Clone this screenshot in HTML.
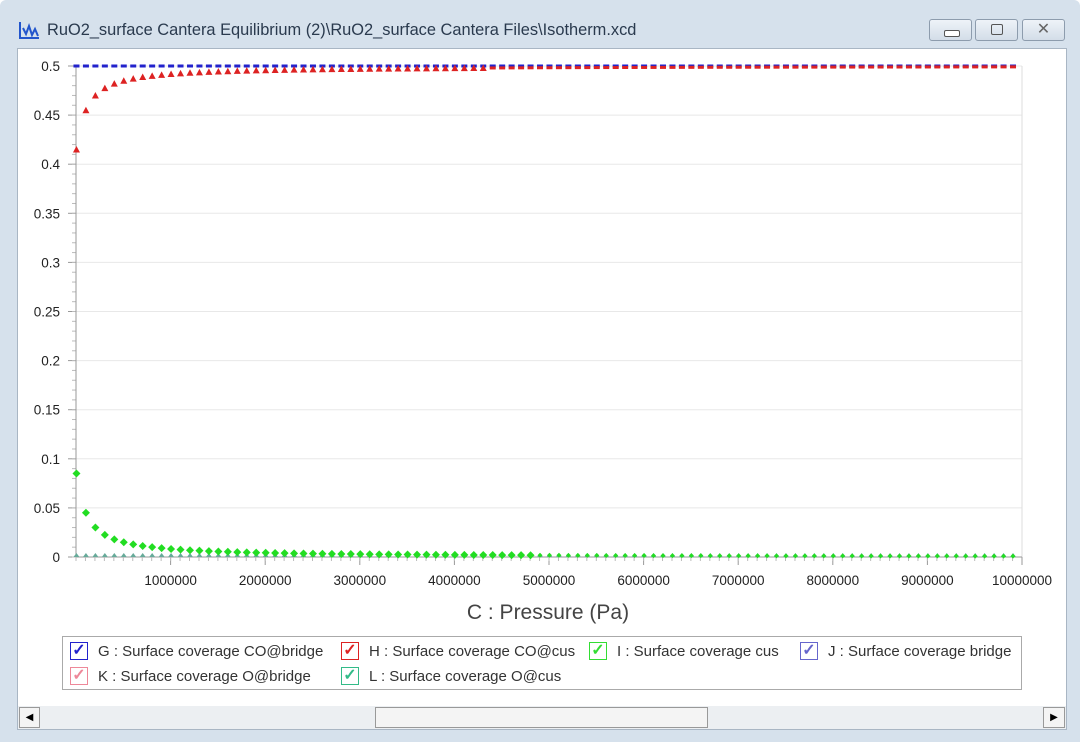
<!DOCTYPE html>
<html><head><style>
body{margin:0;width:1080px;height:742px;overflow:hidden;background:#fff;font-family:"Liberation Sans",sans-serif;}
.frame{position:absolute;left:0;top:0;width:1080px;height:742px;background:#d6e1ec;border-radius:6px 6px 0 0;}
.title{position:absolute;left:47px;top:21px;font-size:16.4px;color:#2a3a4e;}
.client{position:absolute;left:17px;top:48px;width:1050px;height:682px;background:#fff;border:1px solid #a9b6c4;box-sizing:border-box;}
.btn{position:absolute;top:19px;height:22px;border:1px solid #8d9cad;border-radius:3px;background:linear-gradient(#eef3f8,#d3dde8);box-sizing:border-box;}
.sb{position:absolute;left:18px;top:706px;width:1048px;height:23px;background:#eceff2;}
.tk{font-size:13.5px;fill:#222;}
.lg{position:absolute;font-size:15px;color:#333;}
.cb{position:absolute;width:18px;height:18px;border:1px solid;box-sizing:border-box;font-size:16px;line-height:16px;text-align:center;font-weight:bold;}
</style></head><body>
<div class="frame"></div>
<svg style="position:absolute;left:18px;top:20px" width="22" height="20"><rect x="1" y="2" width="2" height="17" fill="#2255cc"/><rect x="1" y="17" width="20" height="2" fill="#2255cc"/><path d="M5 8 L8 14 L11 6 L14 15 L17 9 L20 16" stroke="#2255cc" stroke-width="2" fill="none"/></svg>
<div class="title">RuO2_surface Cantera Equilibrium (2)\RuO2_surface Cantera Files\Isotherm.xcd</div>
<div class="btn" style="left:929px;width:43px"><div style="position:absolute;left:14px;top:10px;width:14px;height:5px;border:1px solid #555;border-radius:2px;background:#fff"></div></div>
<div class="btn" style="left:975px;width:43px"><div style="position:absolute;left:15px;top:4px;width:10px;height:9px;border:1px solid #555;border-radius:2px"></div></div>
<div class="btn" style="left:1022px;width:43px;font-size:16px;color:#666;text-align:center;line-height:20px">✕</div>
<div class="client"></div>
<svg id="plot" style="position:absolute;left:0;top:0" width="1080" height="742"></svg>
<div style="position:absolute;left:62px;top:636px;width:960px;height:54px;border:1px solid #aaa;box-sizing:border-box"></div>
<div class="cb" style="left:70px;top:642px;border-color:#2222cc;color:#2222cc">✓</div><div class="lg" style="left:98px;top:643px">G : Surface coverage CO@bridge</div>
<div class="cb" style="left:341px;top:642px;border-color:#dd2222;color:#dd2222">✓</div><div class="lg" style="left:369px;top:643px">H : Surface coverage CO@cus</div>
<div class="cb" style="left:589px;top:642px;border-color:#33dd33;color:#33dd33">✓</div><div class="lg" style="left:617px;top:643px">I : Surface coverage cus</div>
<div class="cb" style="left:800px;top:642px;border-color:#6666cc;color:#6666cc">✓</div><div class="lg" style="left:828px;top:643px">J : Surface coverage bridge</div>
<div class="cb" style="left:70px;top:667px;border-color:#ee8899;color:#ee8899">✓</div><div class="lg" style="left:98px;top:668px">K : Surface coverage O@bridge</div>
<div class="cb" style="left:341px;top:667px;border-color:#33bb88;color:#33bb88">✓</div><div class="lg" style="left:369px;top:668px">L : Surface coverage O@cus</div>
<div class="sb"></div>
<div style="position:absolute;left:19px;top:707px;width:21px;height:21px;border:1px solid #999;background:#f4f4f4;box-sizing:border-box;font-size:10px;line-height:19px;text-align:center">◀</div>
<div style="position:absolute;left:375px;top:707px;width:333px;height:21px;border:1px solid #999;background:#f4f4f4;box-sizing:border-box"></div>
<div style="position:absolute;left:1043px;top:707px;width:22px;height:21px;border:1px solid #999;background:#f4f4f4;box-sizing:border-box;font-size:10px;line-height:19px;text-align:center">▶</div>
<script>
var s=document.getElementById('plot'),h='';
function X(p){return 76+p/1e7*946}function Y(v){return 557-v/0.5*491}
for(var i=0;i<=10;i++){var y=Y(i*0.05);h+='<line x1="76" x2="1022" y1="'+y+'" y2="'+y+'" stroke="#e8e8e8"/>';h+='<line x1="68" x2="76" y1="'+y+'" y2="'+y+'" stroke="#999"/>';
h+='<text class="tk" x="60" y="'+(y+5)+'" text-anchor="end">'+(i==0?'0':(+(i*0.05).toFixed(2)))+'</text>';}
for(var i=0;i<50;i++){var y=557-i*9.82;h+='<line x1="72" x2="76" y1="'+y+'" y2="'+y+'" stroke="#bbb"/>';}
h+='<line x1="1022" x2="1022" y1="66" y2="557" stroke="#ddd"/>';
h+='<line x1="76" x2="76" y1="66" y2="557" stroke="#999"/><line x1="76" x2="1022" y1="557" y2="557" stroke="#999"/>';
for(var i=1;i<=10;i++){var x=X(i*1e6);h+='<line x1="'+x+'" x2="'+x+'" y1="557" y2="565" stroke="#999"/><text class="tk" x="'+x+'" y="585" text-anchor="middle">'+(i*1e6)+'</text>';}
for(var i=0;i<100;i++){var x=X(i*1e5);h+='<line x1="'+x+'" x2="'+x+'" y1="557" y2="561" stroke="#bbb"/>';}
h+='<text x="548" y="619" text-anchor="middle" style="font-size:21px;fill:#444">C : Pressure (Pa)</text>';
for(var n=1;n<=100;n++){var x=X((n-1)*1e5+5000);var g=0.085/n;if(n>1)g=0.09/n;
var yr=Y(0.5-g),yg=Y(g),yb=Y(0.5);
h+='<rect x="'+(x-3)+'" y="'+(yb-1.5)+'" width="6" height="3" fill="#2222cc"/>';
if(n<45)h+='<path d="M'+(x-3.5)+' '+(yr+3)+'L'+(x+3.5)+' '+(yr+3)+'L'+x+' '+(yr-3.5)+'Z" fill="#dd2222"/>';
else h+='<rect x="'+(x-3)+'" y="'+(yr-1.5)+'" width="6" height="3" fill="#dd2222"/>';
h+='<path d="M'+(x-3)+' 557L'+(x+3)+' 557L'+x+' 553Z" fill="#66aa99"/>';
var r=n<50?4:2.5;h+='<path d="M'+x+' '+(yg-r)+'L'+(x+r)+' '+yg+'L'+x+' '+(yg+r)+'L'+(x-r)+' '+yg+'Z" fill="#22dd22"/>';}
s.innerHTML=h;
</script>
</body></html>
